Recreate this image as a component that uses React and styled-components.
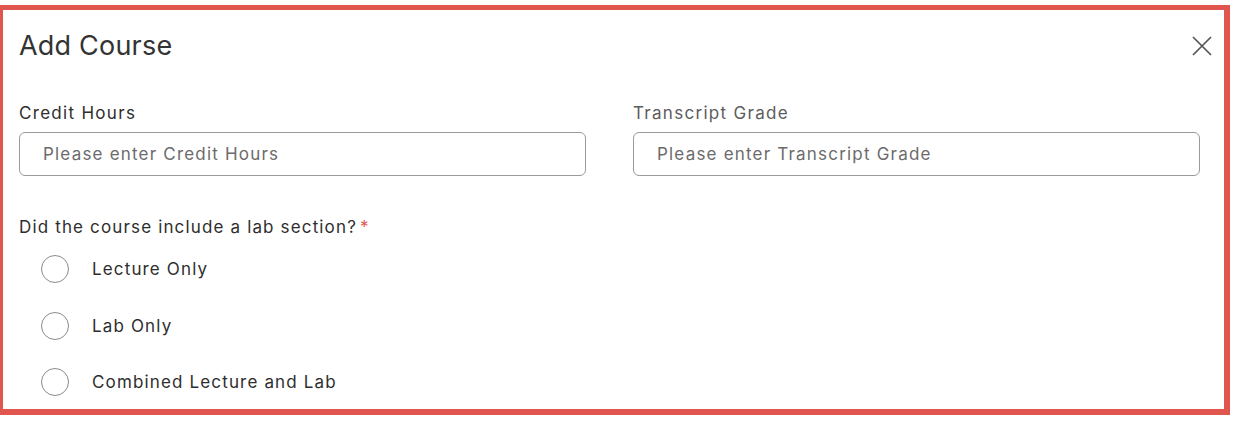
import React from 'react';
import styled, { createGlobalStyle } from 'styled-components';

const GlobalStyle = createGlobalStyle`
  html, body {
    margin: 0;
    padding: 0;
    background: #ffffff;
  }
  body {
    font-family: Inter, "Noto Sans", sans-serif;
    color: #333333;
  }
`;

const Page = styled.div`
  width: 1233px;
  height: 444px;
  padding-top: 5px;
  box-sizing: border-box;
  overflow: hidden;
`;

const Frame = styled.div`
  width: 1230px;
  height: 410px;
  box-sizing: border-box;
  border-style: solid;
  border-color: #e0564f;
  border-width: 5px 6px 6px 3px;
  background: #fff;
`;

const Header = styled.div`
  display: flex;
  justify-content: space-between;
  align-items: center;
  padding: 20px 11px 0 16px;
  height: 52px;
  box-sizing: border-box;
`;

const Title = styled.h2`
  margin: 0;
  font-size: 27px;
  font-weight: 400;
  letter-spacing: 0.2px;
  color: #333;
  line-height: 32px;
`;

const CloseButton = styled.button`
  border: 0;
  background: none;
  padding: 0;
  width: 22px;
  height: 22px;
  display: flex;
  align-items: center;
  justify-content: center;
  cursor: pointer;
`;

const Body = styled.div`
  padding: 41px 24px 0 16px;
`;

const Grid = styled.div`
  display: grid;
  grid-template-columns: 1fr 1fr;
  column-gap: 47px;
`;

const Field = styled.div`
  display: flex;
  flex-direction: column;
`;

const Label = styled.label`
  font-size: 17px;
  line-height: 20px;
  letter-spacing: 1.3px;
  color: ${({ $muted }) => ($muted ? '#5c5c5c' : '#2e2e2e')};
  margin-bottom: 9px;
`;

const Input = styled.input`
  height: 44px;
  box-sizing: border-box;
  border: 1px solid #9a9a9a;
  border-radius: 6px;
  padding: 0 23px;
  font-family: inherit;
  font-size: 17px;
  letter-spacing: 1.2px;
  color: #333;
  outline: none;

  &::placeholder {
    color: #6b6b6b;
  }
`;

const Question = styled.div`
  margin-top: 41px;
  font-size: 17px;
  line-height: 20px;
  letter-spacing: 1.15px;
  color: #2e2e2e;
`;

const Required = styled.span`
  color: #e0564f;
  margin-left: 3px;
`;

const RadioList = styled.div`
  display: flex;
  flex-direction: column;
  margin-top: 18px;
  padding-left: 22px;
  gap: 28.5px;
`;

const RadioRow = styled.label`
  display: flex;
  align-items: center;
  gap: 23px;
  font-size: 17px;
  letter-spacing: 1.15px;
  color: #2e2e2e;
  cursor: pointer;
`;

const RadioCircle = styled.span`
  width: 28px;
  height: 28px;
  box-sizing: border-box;
  border: 1.5px solid #8a8a8a;
  border-radius: 50%;
  flex-shrink: 0;
`;

const options = ['Lecture Only', 'Lab Only', 'Combined Lecture and Lab'];

export default function App() {
  return (
    <>
      <GlobalStyle />
      <Page>
        <Frame>
          <Header>
            <Title>Add Course</Title>
            <CloseButton aria-label="Close">
              <svg width="22" height="22" viewBox="0 0 22 22">
                <path d="M2 2 L20 20 M20 2 L2 20" stroke="#555" strokeWidth="1.7" fill="none" />
              </svg>
            </CloseButton>
          </Header>
          <Body>
            <Grid>
              <Field>
                <Label>Credit Hours</Label>
                <Input placeholder="Please enter Credit Hours" />
              </Field>
              <Field>
                <Label $muted>Transcript Grade</Label>
                <Input placeholder="Please enter Transcript Grade" />
              </Field>
            </Grid>
            <Question>
              Did the course include a lab section?<Required>*</Required>
            </Question>
            <RadioList>
              {options.map((o) => (
                <RadioRow key={o}>
                  <RadioCircle />
                  {o}
                </RadioRow>
              ))}
            </RadioList>
          </Body>
        </Frame>
      </Page>
    </>
  );
}
